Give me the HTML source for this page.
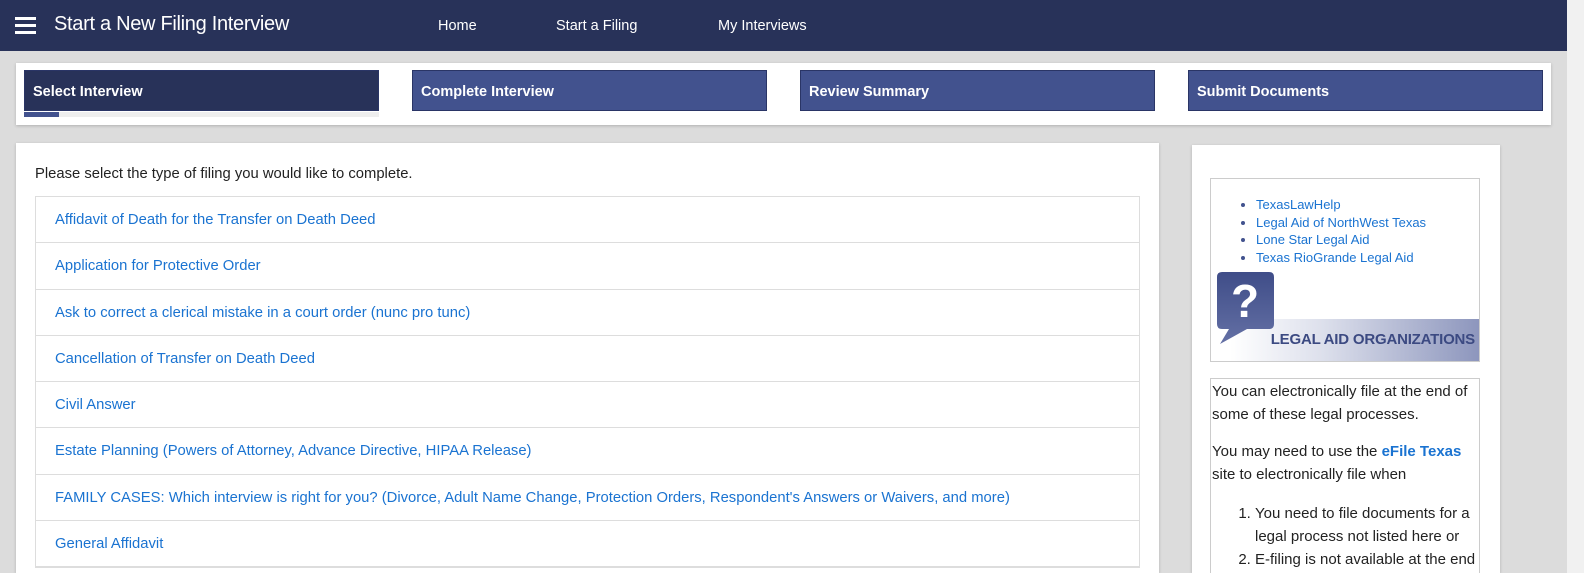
<!DOCTYPE html>
<html><head><style>
*{box-sizing:border-box;margin:0;padding:0}
html,body{width:1584px;height:573px;overflow:hidden}
body{background:#dcdcdc;font-family:"Liberation Sans",sans-serif;position:relative}
.hdr{position:absolute;left:0;top:0;width:1567px;height:51px;background:#283259}
.hdr .t{position:absolute;left:54px;top:13px;color:#fff;font-size:20px;letter-spacing:-0.3px}
.hdr .n{position:absolute;top:18px;color:#fff;font-size:14.5px}
.burger{position:absolute;left:15px;top:17px;width:21px}
.burger i{display:block;height:3px;background:#fff;margin-bottom:4px}
.steps{position:absolute;left:16px;top:63px;width:1535px;height:62px;background:#fff;box-shadow:0 1px 3px rgba(0,0,0,.2)}
.st{position:absolute;top:7px;width:355px;height:41px;background:#42528e;border:1px solid #2a3566;color:#fff;font-weight:bold;font-size:14.5px;padding:13px 8px}
.prog{position:absolute;left:8px;top:49px;width:355px;height:5px;background:#eee}
.prog i{display:block;width:35px;height:5px;background:#42528e}
.main{position:absolute;left:16px;top:143px;width:1143px;height:430px;background:#fff;box-shadow:0 1px 3px rgba(0,0,0,.2);overflow:hidden}
.main p{position:absolute;left:19px;top:23px;font-size:14.8px;color:#222}
.list{position:absolute;left:19px;top:53px;width:1105px;border:1px solid #ddd}
.list div{height:46.3px;border-bottom:1px solid #ddd;padding:15px 19px;font-size:14.8px;color:#1a73d1}
.side{position:absolute;left:1192px;top:145px;width:308px;height:428px;background:#fff;box-shadow:0 1px 3px rgba(0,0,0,.2);overflow:hidden}
.b1{position:absolute;left:18px;top:33px;width:270px;height:184px;border:1px solid #ccc}
.b1 ul{position:absolute;left:45px;top:17px;font-size:13px;line-height:17.6px;color:#1a73d1}
.b1 li::marker{color:#42528e}
.band{position:absolute;left:6px;top:140px;width:262px;height:42px;background:linear-gradient(90deg,#fff 5%,#dde0ec 40%,#8d96bd)}
.band span{position:absolute;right:4px;top:12px;font-weight:bold;font-size:15px;color:#3c4a82;letter-spacing:-0.2px}
.b2{position:absolute;left:18px;top:233px;width:270px;height:200px;border:1px solid #ccc;font-size:15px;line-height:23px;color:#222;padding:0 2px 0 1px;overflow:hidden}
.b2 a{color:#1a73d1;font-weight:bold;text-decoration:none}
.sb{position:absolute;left:1567px;top:0;width:17px;height:573px;background:#f1f1f1}
</style></head><body>
<div class="hdr"><div class="burger"><i></i><i></i><i></i></div><div class="t">Start a New Filing Interview</div>
<div class="n" style="left:438px">Home</div><div class="n" style="left:556px">Start a Filing</div><div class="n" style="left:718px">My Interviews</div></div>
<div class="sb"></div>
<div class="steps">
<div class="st" style="left:8px;background:#283259">Select Interview</div>
<div class="st" style="left:396px">Complete Interview</div>
<div class="st" style="left:784px">Review Summary</div>
<div class="st" style="left:1172px">Submit Documents</div>
<div class="prog"><i></i></div></div>
<div class="main"><p>Please select the type of filing you would like to complete.</p>
<div class="list">
<div>Affidavit of Death for the Transfer on Death Deed</div>
<div>Application for Protective Order</div>
<div>Ask to correct a clerical mistake in a court order (nunc pro tunc)</div>
<div>Cancellation of Transfer on Death Deed</div>
<div>Civil Answer</div>
<div>Estate Planning (Powers of Attorney, Advance Directive, HIPAA Release)</div>
<div>FAMILY CASES: Which interview is right for you? (Divorce, Adult Name Change, Protection Orders, Respondent's Answers or Waivers, and more)</div>
<div>General Affidavit</div>
</div></div>
<div class="side">
<div class="b1"><ul><li>TexasLawHelp</li><li>Legal Aid of NorthWest Texas</li><li>Lone Star Legal Aid</li><li>Texas RioGrande Legal Aid</li></ul>
<div class="band"><span>LEGAL AID ORGANIZATIONS</span></div>
<svg style="position:absolute;left:6px;top:93px" width="58" height="75" viewBox="0 0 58 75"><defs><linearGradient id="g" x1="0" y1="0" x2="0" y2="1"><stop offset="0" stop-color="#3f4d88"/><stop offset="1" stop-color="#6470a5"/></linearGradient></defs><path d="M5 0H52Q57 0 57 5V52Q57 57 52 57H30L3 72L12 57H5Q0 57 0 52V5Q0 0 5 0Z" fill="url(#g)"/><text x="14" y="45" font-family="Liberation Sans" font-weight="bold" font-size="46" fill="#fff">?</text></svg>
</div>
<div class="b2"><p style="margin-top:1px">You can electronically file at the end of some of these legal processes.</p>
<p style="margin-top:14px">You may need to use the <a>eFile Texas</a> site to electronically file when</p>
<ol style="margin-top:16px;padding-left:43px"><li>You need to file documents for a legal process not listed here or</li><li>E-filing is not available at the end</li></ol></div>
</div>
</body></html>
